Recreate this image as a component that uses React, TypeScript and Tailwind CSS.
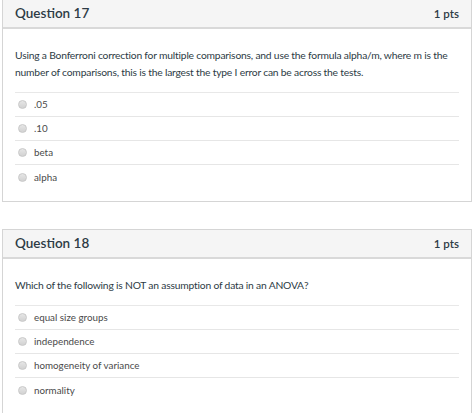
const questions = [
  {
    title: "Question 17",
    points: "1 pts",
    text: "Using a Bonferroni correction for multiple comparisons, and use the formula alpha/m, where m is the number of comparisons, this is the largest the type I error can be across the tests.",
    answers: [".05", ".10", "beta", "alpha"],
  },
  {
    title: "Question 18",
    points: "1 pts",
    text: "Which of the following is NOT an assumption of data in an ANOVA?",
    answers: ["equal size groups", "independence", "homogeneity of variance", "normality"],
  },
];

const Radio = () => (
  <span className="inline-block w-[9px] h-[9px] rounded-full border border-[#c8c8c8] bg-gradient-to-b from-[#e6e6e6] to-[#d2d2d2] shrink-0" />
);

const QuestionCard = ({ q }: { q: (typeof questions)[number] }) => (
  <div className="mx-[2px] border border-[#d5d5d5] bg-white">
    <div className="flex justify-between items-center h-[29px] px-[12px] bg-[#f5f5f5] border-b-2 border-[#d9d9d9]">
      <span className="text-[13.5px] font-semibold text-[#2d3b45]">{q.title}</span>
      <span className="text-[11.5px] font-semibold text-[#2d3b45]">{q.points}</span>
    </div>
    <div className="px-[12px] pt-[18px] pb-[12px]">
      <p className="text-[10.3px] tracking-[-0.2px] leading-[17px] text-[#2d3b45] mb-[11px]">{q.text}</p>
      <div className="border-t border-[#e8e8e8]">
        {q.answers.map((a, i) => (
          <div
            key={i}
            className={`flex items-center gap-[7px] h-[24px] pl-[3px] ${
              i < q.answers.length - 1 ? "border-b border-[#e6e6e6]" : ""
            }`}
          >
            <Radio />
            <span className="text-[9.8px] text-[#4a4a4a]">{a}</span>
          </div>
        ))}
      </div>
    </div>
  </div>
);

export default function App() {
  return (
    <div
      className="w-[474px] h-[414px] overflow-hidden bg-white flex flex-col gap-[27px] -mt-px"
      style={{ fontFamily: "Lato, 'Open Sans', sans-serif" }}
    >
      {questions.map((q, i) => (
        <QuestionCard key={i} q={q} />
      ))}
    </div>
  );
}
